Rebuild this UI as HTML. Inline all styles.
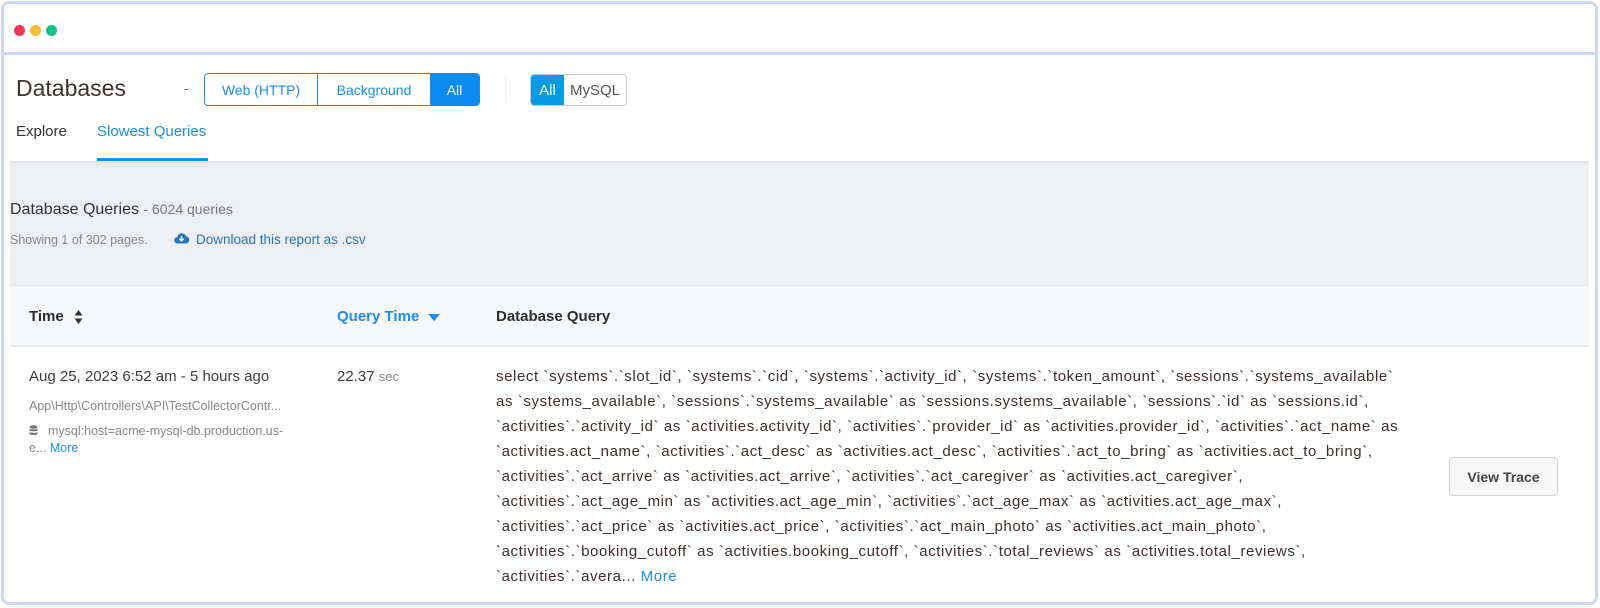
<!DOCTYPE html>
<html><head><meta charset="utf-8"><style>
*{box-sizing:border-box;margin:0;padding:0}
body{width:1600px;height:608px;background:#fff;font-family:"Liberation Sans",sans-serif;color:#3b3433;position:relative;overflow:hidden}
.frame{position:absolute;left:1px;top:1px;width:1597px;height:604px;border:3px solid #ccd8f6;border-radius:8px;background:#fff}
.titlebar{position:absolute;left:0;top:0;right:0;height:51px;border-bottom:3px solid #ccd8f6}
.dot{position:absolute;top:21px;width:11px;height:11px;border-radius:50%}
.a{position:absolute;white-space:nowrap}
.bg{position:absolute;width:276px;height:33px;border:1px solid #1a8fe8;border-radius:4px;display:flex;overflow:hidden}
.bg div{height:100%;display:flex;align-items:center;justify-content:center;font-size:14px;color:#1a8fe8}
.q{position:absolute;left:496px;font-size:15px;letter-spacing:0.6px;white-space:nowrap;color:#3d2f2c}
</style></head><body>
<div class="frame">
 <div class="titlebar">
  <div class="dot" style="left:10px;background:#f0365a"></div>
  <div class="dot" style="left:26px;background:#f7be3a"></div>
  <div class="dot" style="left:42px;background:#13c08a"></div>
 </div>
</div>
<div class="a" style="left:16px;top:75px;font-size:23px;color:#3a3330">Databases</div>
<div class="a" style="left:184px;top:80px;font-size:14px;color:#666">-</div>
<div class="bg" style="left:204px;top:73px">
 <div style="width:113px;border-right:1px solid #1a8fe8">Web (HTTP)</div>
 <div style="width:112px">Background</div>
 <div style="flex:1;background:#0b8af0;color:#fff">All</div>
</div>
<div style="position:absolute;left:505px;top:77px;width:1px;height:26px;background:#eee"></div>
<div style="position:absolute;left:530px;top:74px;width:97px;height:32px;border:1px solid #c9ccd2;border-radius:4px;display:flex;overflow:hidden;font-size:15px">
 <div style="width:33px;background:#0b9ae6;color:#fff;display:flex;align-items:center;justify-content:center">All</div>
 <div style="flex:1;display:flex;align-items:center;justify-content:center;color:#555">MySQL</div>
</div>
<div class="a" style="left:16px;top:123px;font-size:15px;color:#333">Explore</div>
<div class="a" style="left:97px;top:123px;font-size:15px;color:#1a8fe8">Slowest Queries</div>
<div style="position:absolute;left:97px;top:158px;width:111px;height:3px;background:#1a8fe8"></div>
<div style="position:absolute;left:10px;top:161px;width:1579px;height:126px;background:#eeeff3;border-top:2px solid #e2e4e8"></div>
<div class="a" style="left:10px;top:201px;font-size:16px;color:#333">Database Queries <span style="font-size:14px;color:#777">- 6024 queries</span></div>
<div class="a" style="left:10px;top:233px;font-size:12.5px;color:#888">Showing 1 of 302 pages.</div>
<svg style="position:absolute;left:174px;top:231px" width="15" height="14" viewBox="0 0 15 14"><path d="M3.5 12.5A3.2 3.2 0 0 1 3.3 6.1 4.5 4.5 0 0 1 12 5.3a3.4 3.4 0 0 1 -0.5 7.2z" fill="#2677b8"/><path d="M7.5 5v4.5M5.5 7.8l2 2 2-2" stroke="#fff" stroke-width="1.5" fill="none"/></svg>
<div class="a" style="left:196px;top:232px;font-size:13.5px;color:#2677b8">Download this report as .csv</div>
<div style="position:absolute;left:10px;top:287px;width:1579px;height:60px;background:#f7f8fa;border-bottom:2px solid #e6e8ec"></div>
<div class="a" style="left:29px;top:308px;font-size:15px;font-weight:bold;color:#2d2d2d">Time</div>
<svg style="position:absolute;left:74px;top:310px" width="9" height="14" viewBox="0 0 9 14"><path d="M4.5 0L8.5 5.5H.5zM4.5 14L8.5 8.5H.5z" fill="#333"/></svg>
<div class="a" style="left:337px;top:308px;font-size:15px;font-weight:bold;color:#1a8fe8">Query Time</div>
<svg style="position:absolute;left:428px;top:314px" width="12" height="7" viewBox="0 0 12 7"><path d="M0 0H12L6 7z" fill="#1a8fe8"/></svg>
<div class="a" style="left:496px;top:308px;font-size:15px;font-weight:bold;color:#2d2d2d">Database Query</div>
<div class="a" style="left:29px;top:368px;font-size:15px;color:#3d3d3d">Aug 25, 2023 6:52 am - 5 hours ago</div>
<div class="a" style="left:29px;top:399px;font-size:12.5px;color:#888">App\Http\Controllers\API\TestCollectorContr...</div>
<svg style="position:absolute;left:29px;top:425px" width="9" height="11" viewBox="0 0 9 11"><ellipse cx="4.5" cy="2" rx="4" ry="1.7" fill="#777"/><path d="M.5 3.5v2c0 1 8 1 8 0v-2c0 1-8 1-8 0zM.5 7v2c0 1.3 8 1.3 8 0V7c0 1-8 1-8 0z" fill="#777"/></svg>
<div class="a" style="left:48px;top:424px;font-size:12.5px;color:#888">mysql:host=acme-mysql-db.production.us-</div>
<div class="a" style="left:29px;top:441px;font-size:12.5px;color:#888">e... <span style="color:#1a8fe8">More</span></div>
<div class="a" style="left:337px;top:368px;font-size:15px;color:#3d3d3d">22.37 <span style="font-size:13px;color:#888">sec</span></div>
<div class="q" style="top:368px">select `systems`.`slot_id`, `systems`.`cid`, `systems`.`activity_id`, `systems`.`token_amount`, `sessions`.`systems_available`</div>
<div class="q" style="top:393px">as `systems_available`, `sessions`.`systems_available` as `sessions.systems_available`, `sessions`.`id` as `sessions.id`,</div>
<div class="q" style="top:418px">`activities`.`activity_id` as `activities.activity_id`, `activities`.`provider_id` as `activities.provider_id`, `activities`.`act_name` as</div>
<div class="q" style="top:443px">`activities.act_name`, `activities`.`act_desc` as `activities.act_desc`, `activities`.`act_to_bring` as `activities.act_to_bring`,</div>
<div class="q" style="top:468px">`activities`.`act_arrive` as `activities.act_arrive`, `activities`.`act_caregiver` as `activities.act_caregiver`,</div>
<div class="q" style="top:493px">`activities`.`act_age_min` as `activities.act_age_min`, `activities`.`act_age_max` as `activities.act_age_max`,</div>
<div class="q" style="top:518px">`activities`.`act_price` as `activities.act_price`, `activities`.`act_main_photo` as `activities.act_main_photo`,</div>
<div class="q" style="top:543px">`activities`.`booking_cutoff` as `activities.booking_cutoff`, `activities`.`total_reviews` as `activities.total_reviews`,</div>
<div class="q" style="top:568px">`activities`.`avera... <span style="color:#1a8fe8">More</span></div>
<div style="position:absolute;left:1449px;top:457px;width:109px;height:39px;border:1px solid #d4d4d4;border-radius:4px;background:#f7f7f7;display:flex;align-items:center;justify-content:center;font-size:14px;font-weight:bold;color:#444">View Trace</div>
</body></html>
